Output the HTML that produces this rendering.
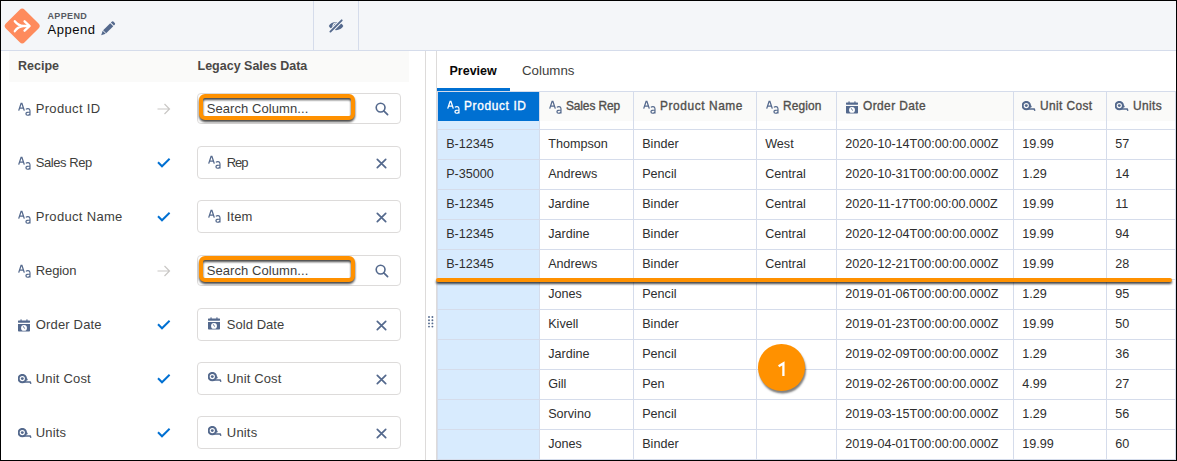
<!DOCTYPE html>
<html><head><meta charset="utf-8"><style>
html,body{margin:0;padding:0;}
body{width:1177px;height:461px;overflow:hidden;position:relative;background:#fff;font-family:"Liberation Sans", sans-serif;}
</style></head><body>
<div style="position:absolute;left:0;top:0;width:1177px;height:50px;background:#f4f6f9"></div>
<div style="position:absolute;left:0;top:50px;width:1177px;height:1px;background:#d5dceb"></div>
<div style="position:absolute;left:313px;top:0;width:1px;height:50px;background:#d5dceb"></div>
<div style="position:absolute;left:358px;top:0;width:1px;height:50px;background:#d5dceb"></div>
<svg style="position:absolute;left:3px;top:7px" width="38" height="38" viewBox="0 0 38 38">
<rect x="5.9" y="5.7" width="26.6" height="26.6" rx="3.5" fill="#fe8b5d" transform="rotate(45 19.2 19)"/>
<path d="M11.8 14.2 Q15.2 18.6 20.3 19 M11.8 24.2 Q15.2 19.4 20.3 19 M19 19 H26" stroke="#fff" stroke-width="2.3" fill="none" stroke-linecap="round"/>
<path d="M21.6 14.3 L26.6 19 L21.6 23.7" stroke="#fff" stroke-width="2.4" fill="none" stroke-linecap="round" stroke-linejoin="round"/>
</svg>
<div style="position:absolute;left:47.4px;top:5.78px;line-height:20px;font-size:9px;color:#565a62;font-weight:bold;white-space:nowrap;letter-spacing:0.394px;">APPEND</div>
<div style="position:absolute;left:47.4px;top:19.80px;line-height:20px;font-size:13px;color:#080707;font-weight:normal;white-space:nowrap;letter-spacing:0.570px;">Append</div>
<svg style="position:absolute;left:98px;top:19px" width="20" height="20" viewBox="0 0 20 20">
<g transform="translate(3.2 16.2) rotate(-45)"><path d="M0 0 L4.2 -2.15 V2.15 Z" fill="#54698d"/><rect x="4.9" y="-2.15" width="10" height="4.3" fill="#54698d"/><path d="M15.8 -2.15 H17 Q18.2 -2.15 18.2 -1 V1 Q18.2 2.15 17 2.15 H15.8 Z" fill="#54698d"/></g></svg>
<svg style="position:absolute;left:327px;top:17px" width="18" height="18" viewBox="0 0 18 18">
<path d="M1.8 9.1 C4.2 3.6 13.9 3.6 16.3 9.1 C13.9 14.6 4.2 14.6 1.8 9.1 Z" fill="#54698d"/>
<path d="M6.2 10.2 A3 3 0 0 1 9.6 6.1" stroke="#f4f6f9" stroke-width="1.1" fill="none"/>
<path d="M3.4 14.6 L14.7 3.3" stroke="#f4f6f9" stroke-width="3.9"/>
<path d="M3.4 14.6 L14.7 3.3" stroke="#54698d" stroke-width="1.9" stroke-linecap="round"/></svg>
<div style="position:absolute;left:9px;top:51px;width:400px;height:31px;background:#fafaf9"></div>
<div style="position:absolute;left:18px;top:56.07px;line-height:20px;font-size:12.5px;color:#4a4846;font-weight:bold;white-space:nowrap;">Recipe</div>
<div style="position:absolute;left:197.5px;top:56.07px;line-height:20px;font-size:12.5px;color:#4a4846;font-weight:bold;white-space:nowrap;">Legacy Sales Data</div>
<svg style="position:absolute;left:18px;top:102.0px" width="14" height="14" viewBox="0 0 14 14">
<path d="M0.7 8.6 L3.1 1.3 H3.9 L6.3 8.6 M1.75 6.1 H5.25" stroke="#54698d" stroke-width="1.3" fill="none"/>
<path d="M7.9 7.4 C8.6 6.7 9.5 6.6 10.2 6.65 C11.5 6.8 12.0 7.6 12.0 8.7 V13.5 M12.0 10.0 C9.6 9.9 7.9 10.5 7.9 11.8 C7.9 12.8 8.6 13.2 9.5 13.2 C10.8 13.2 12.0 12.4 12.0 11.2" stroke="#54698d" stroke-width="1.15" fill="none"/></svg>
<div style="position:absolute;left:35.7px;top:98.50px;line-height:20px;font-size:13px;color:#3e3e3c;font-weight:normal;white-space:nowrap;letter-spacing:0.342px;">Product ID</div>
<svg style="position:absolute;left:157px;top:102.5px" width="14" height="12" viewBox="0 0 14 12">
<path d="M0.5 6 H12.5 M7.5 1 L12.5 6 L7.5 11" stroke="#c9c7c5" stroke-width="1.2" fill="none"/></svg>
<div style="position:absolute;left:197px;top:93.0px;width:204px;height:31px;box-sizing:border-box;border:1px solid #dddbda;border-radius:4px;background:#fff"></div>
<div style="position:absolute;left:206.7px;top:98.60px;line-height:20px;font-size:13px;color:#3e3e3c;font-weight:normal;white-space:nowrap;letter-spacing:0.078px;">Search Column...</div>
<svg style="position:absolute;left:375px;top:101.5px" width="14" height="14" viewBox="0 0 14 14">
<circle cx="5.6" cy="5.6" r="4.4" stroke="#54698d" stroke-width="1.6" fill="none"/>
<path d="M8.8 8.8 L12.6 12.6" stroke="#54698d" stroke-width="1.7" stroke-linecap="round"/></svg>
<div style="position:absolute;left:199px;top:94.0px;width:156px;height:26px;box-sizing:border-box;border:4px solid #ff9100;border-radius:6px;filter:drop-shadow(0.7px 2.2px 1px rgba(0,0,0,0.72))"></div>
<svg style="position:absolute;left:18px;top:156.0px" width="14" height="14" viewBox="0 0 14 14">
<path d="M0.7 8.6 L3.1 1.3 H3.9 L6.3 8.6 M1.75 6.1 H5.25" stroke="#54698d" stroke-width="1.3" fill="none"/>
<path d="M7.9 7.4 C8.6 6.7 9.5 6.6 10.2 6.65 C11.5 6.8 12.0 7.6 12.0 8.7 V13.5 M12.0 10.0 C9.6 9.9 7.9 10.5 7.9 11.8 C7.9 12.8 8.6 13.2 9.5 13.2 C10.8 13.2 12.0 12.4 12.0 11.2" stroke="#54698d" stroke-width="1.15" fill="none"/></svg>
<div style="position:absolute;left:35.7px;top:152.50px;line-height:20px;font-size:13px;color:#3e3e3c;font-weight:normal;white-space:nowrap;letter-spacing:-0.437px;">Sales Rep</div>
<svg style="position:absolute;left:157px;top:157.5px" width="14" height="10" viewBox="0 0 14 10">
<path d="M1 4.2 L5 8.3 L12.6 0.8" stroke="#0070d2" stroke-width="1.95" fill="none"/></svg>
<div style="position:absolute;left:197px;top:146.0px;width:204px;height:33px;box-sizing:border-box;border:1px solid #dddbda;border-radius:4px;background:#fff"></div>
<svg style="position:absolute;left:208px;top:154.5px" width="14" height="14" viewBox="0 0 14 14">
<path d="M0.7 8.6 L3.1 1.3 H3.9 L6.3 8.6 M1.75 6.1 H5.25" stroke="#54698d" stroke-width="1.3" fill="none"/>
<path d="M7.9 7.4 C8.6 6.7 9.5 6.6 10.2 6.65 C11.5 6.8 12.0 7.6 12.0 8.7 V13.5 M12.0 10.0 C9.6 9.9 7.9 10.5 7.9 11.8 C7.9 12.8 8.6 13.2 9.5 13.2 C10.8 13.2 12.0 12.4 12.0 11.2" stroke="#54698d" stroke-width="1.15" fill="none"/></svg>
<div style="position:absolute;left:226.8px;top:152.50px;line-height:20px;font-size:13px;color:#3e3e3c;font-weight:normal;white-space:nowrap;letter-spacing:-1.078px;">Rep</div>
<svg style="position:absolute;left:375.5px;top:157.5px" width="11" height="11" viewBox="0 0 11 11">
<path d="M1.3 1.3 L9.7 9.7 M9.7 1.3 L1.3 9.7" stroke="#54698d" stroke-width="1.7" fill="none" stroke-linecap="round"/></svg>
<svg style="position:absolute;left:18px;top:210.0px" width="14" height="14" viewBox="0 0 14 14">
<path d="M0.7 8.6 L3.1 1.3 H3.9 L6.3 8.6 M1.75 6.1 H5.25" stroke="#54698d" stroke-width="1.3" fill="none"/>
<path d="M7.9 7.4 C8.6 6.7 9.5 6.6 10.2 6.65 C11.5 6.8 12.0 7.6 12.0 8.7 V13.5 M12.0 10.0 C9.6 9.9 7.9 10.5 7.9 11.8 C7.9 12.8 8.6 13.2 9.5 13.2 C10.8 13.2 12.0 12.4 12.0 11.2" stroke="#54698d" stroke-width="1.15" fill="none"/></svg>
<div style="position:absolute;left:35.7px;top:206.50px;line-height:20px;font-size:13px;color:#3e3e3c;font-weight:normal;white-space:nowrap;letter-spacing:0.321px;">Product Name</div>
<svg style="position:absolute;left:157px;top:211.5px" width="14" height="10" viewBox="0 0 14 10">
<path d="M1 4.2 L5 8.3 L12.6 0.8" stroke="#0070d2" stroke-width="1.95" fill="none"/></svg>
<div style="position:absolute;left:197px;top:200.0px;width:204px;height:33px;box-sizing:border-box;border:1px solid #dddbda;border-radius:4px;background:#fff"></div>
<svg style="position:absolute;left:208px;top:208.5px" width="14" height="14" viewBox="0 0 14 14">
<path d="M0.7 8.6 L3.1 1.3 H3.9 L6.3 8.6 M1.75 6.1 H5.25" stroke="#54698d" stroke-width="1.3" fill="none"/>
<path d="M7.9 7.4 C8.6 6.7 9.5 6.6 10.2 6.65 C11.5 6.8 12.0 7.6 12.0 8.7 V13.5 M12.0 10.0 C9.6 9.9 7.9 10.5 7.9 11.8 C7.9 12.8 8.6 13.2 9.5 13.2 C10.8 13.2 12.0 12.4 12.0 11.2" stroke="#54698d" stroke-width="1.15" fill="none"/></svg>
<div style="position:absolute;left:226.8px;top:206.50px;line-height:20px;font-size:13px;color:#3e3e3c;font-weight:normal;white-space:nowrap;letter-spacing:0.072px;">Item</div>
<svg style="position:absolute;left:375.5px;top:211.5px" width="11" height="11" viewBox="0 0 11 11">
<path d="M1.3 1.3 L9.7 9.7 M9.7 1.3 L1.3 9.7" stroke="#54698d" stroke-width="1.7" fill="none" stroke-linecap="round"/></svg>
<svg style="position:absolute;left:18px;top:264.0px" width="14" height="14" viewBox="0 0 14 14">
<path d="M0.7 8.6 L3.1 1.3 H3.9 L6.3 8.6 M1.75 6.1 H5.25" stroke="#54698d" stroke-width="1.3" fill="none"/>
<path d="M7.9 7.4 C8.6 6.7 9.5 6.6 10.2 6.65 C11.5 6.8 12.0 7.6 12.0 8.7 V13.5 M12.0 10.0 C9.6 9.9 7.9 10.5 7.9 11.8 C7.9 12.8 8.6 13.2 9.5 13.2 C10.8 13.2 12.0 12.4 12.0 11.2" stroke="#54698d" stroke-width="1.15" fill="none"/></svg>
<div style="position:absolute;left:35.7px;top:260.50px;line-height:20px;font-size:13px;color:#3e3e3c;font-weight:normal;white-space:nowrap;letter-spacing:-0.082px;">Region</div>
<svg style="position:absolute;left:157px;top:264.5px" width="14" height="12" viewBox="0 0 14 12">
<path d="M0.5 6 H12.5 M7.5 1 L12.5 6 L7.5 11" stroke="#c9c7c5" stroke-width="1.2" fill="none"/></svg>
<div style="position:absolute;left:197px;top:255.0px;width:204px;height:31px;box-sizing:border-box;border:1px solid #dddbda;border-radius:4px;background:#fff"></div>
<div style="position:absolute;left:206.7px;top:260.60px;line-height:20px;font-size:13px;color:#3e3e3c;font-weight:normal;white-space:nowrap;letter-spacing:0.078px;">Search Column...</div>
<svg style="position:absolute;left:375px;top:263.5px" width="14" height="14" viewBox="0 0 14 14">
<circle cx="5.6" cy="5.6" r="4.4" stroke="#54698d" stroke-width="1.6" fill="none"/>
<path d="M8.8 8.8 L12.6 12.6" stroke="#54698d" stroke-width="1.7" stroke-linecap="round"/></svg>
<div style="position:absolute;left:199px;top:256.0px;width:156px;height:26px;box-sizing:border-box;border:4px solid #ff9100;border-radius:6px;filter:drop-shadow(0.7px 2.2px 1px rgba(0,0,0,0.72))"></div>
<svg style="position:absolute;left:18px;top:318.6px" width="12" height="13" viewBox="0 0 12 13">
<path d="M2.6 0.3 L3.5 0.3 L3.7 2 H2.4 Z M8.5 0.3 L9.4 0.3 L9.6 2 H8.3 Z" fill="#54698d"/>
<rect x="0" y="1.6" width="12" height="2.1" rx="0.4" fill="#54698d"/>
<path d="M0 4.9 H12 V11.7 Q12 12.5 11.2 12.5 H0.8 Q0 12.5 0 11.7 Z" fill="#54698d"/>
<circle cx="6" cy="8.9" r="2.95" fill="#fff"/><path d="M5.3 7.3 L6.6 9.6" stroke="#54698d" stroke-width="0.9" fill="none"/></svg>
<div style="position:absolute;left:35.7px;top:314.50px;line-height:20px;font-size:13px;color:#3e3e3c;font-weight:normal;white-space:nowrap;letter-spacing:0.179px;">Order Date</div>
<svg style="position:absolute;left:157px;top:319.5px" width="14" height="10" viewBox="0 0 14 10">
<path d="M1 4.2 L5 8.3 L12.6 0.8" stroke="#0070d2" stroke-width="1.95" fill="none"/></svg>
<div style="position:absolute;left:197px;top:308.0px;width:204px;height:33px;box-sizing:border-box;border:1px solid #dddbda;border-radius:4px;background:#fff"></div>
<svg style="position:absolute;left:208px;top:317.1px" width="12" height="13" viewBox="0 0 12 13">
<path d="M2.6 0.3 L3.5 0.3 L3.7 2 H2.4 Z M8.5 0.3 L9.4 0.3 L9.6 2 H8.3 Z" fill="#54698d"/>
<rect x="0" y="1.6" width="12" height="2.1" rx="0.4" fill="#54698d"/>
<path d="M0 4.9 H12 V11.7 Q12 12.5 11.2 12.5 H0.8 Q0 12.5 0 11.7 Z" fill="#54698d"/>
<circle cx="6" cy="8.9" r="2.95" fill="#fff"/><path d="M5.3 7.3 L6.6 9.6" stroke="#54698d" stroke-width="0.9" fill="none"/></svg>
<div style="position:absolute;left:226.8px;top:314.50px;line-height:20px;font-size:13px;color:#3e3e3c;font-weight:normal;white-space:nowrap;letter-spacing:0.041px;">Sold Date</div>
<svg style="position:absolute;left:375.5px;top:319.5px" width="11" height="11" viewBox="0 0 11 11">
<path d="M1.3 1.3 L9.7 9.7 M9.7 1.3 L1.3 9.7" stroke="#54698d" stroke-width="1.7" fill="none" stroke-linecap="round"/></svg>
<svg style="position:absolute;left:18px;top:373.5px" width="14" height="11" viewBox="0 0 14 11">
<circle cx="4.3" cy="4.6" r="3.65" stroke="#54698d" stroke-width="2.1" fill="none"/>
<circle cx="4.3" cy="4.6" r="1.45" fill="#54698d"/><circle cx="8.7" cy="5.6" r="1.0" fill="#54698d"/>
<path d="M6.5 8.1 H12.2 L12.7 9.3" stroke="#54698d" stroke-width="1.5" fill="none" stroke-linecap="round"/></svg>
<div style="position:absolute;left:35.7px;top:368.50px;line-height:20px;font-size:13px;color:#3e3e3c;font-weight:normal;white-space:nowrap;letter-spacing:0.196px;">Unit Cost</div>
<svg style="position:absolute;left:157px;top:373.5px" width="14" height="10" viewBox="0 0 14 10">
<path d="M1 4.2 L5 8.3 L12.6 0.8" stroke="#0070d2" stroke-width="1.95" fill="none"/></svg>
<div style="position:absolute;left:197px;top:362.0px;width:204px;height:33px;box-sizing:border-box;border:1px solid #dddbda;border-radius:4px;background:#fff"></div>
<svg style="position:absolute;left:208px;top:372.0px" width="14" height="11" viewBox="0 0 14 11">
<circle cx="4.3" cy="4.6" r="3.65" stroke="#54698d" stroke-width="2.1" fill="none"/>
<circle cx="4.3" cy="4.6" r="1.45" fill="#54698d"/><circle cx="8.7" cy="5.6" r="1.0" fill="#54698d"/>
<path d="M6.5 8.1 H12.2 L12.7 9.3" stroke="#54698d" stroke-width="1.5" fill="none" stroke-linecap="round"/></svg>
<div style="position:absolute;left:226.8px;top:368.50px;line-height:20px;font-size:13px;color:#3e3e3c;font-weight:normal;white-space:nowrap;letter-spacing:0.134px;">Unit Cost</div>
<svg style="position:absolute;left:375.5px;top:373.5px" width="11" height="11" viewBox="0 0 11 11">
<path d="M1.3 1.3 L9.7 9.7 M9.7 1.3 L1.3 9.7" stroke="#54698d" stroke-width="1.7" fill="none" stroke-linecap="round"/></svg>
<svg style="position:absolute;left:18px;top:427.5px" width="14" height="11" viewBox="0 0 14 11">
<circle cx="4.3" cy="4.6" r="3.65" stroke="#54698d" stroke-width="2.1" fill="none"/>
<circle cx="4.3" cy="4.6" r="1.45" fill="#54698d"/><circle cx="8.7" cy="5.6" r="1.0" fill="#54698d"/>
<path d="M6.5 8.1 H12.2 L12.7 9.3" stroke="#54698d" stroke-width="1.5" fill="none" stroke-linecap="round"/></svg>
<div style="position:absolute;left:35.7px;top:422.50px;line-height:20px;font-size:13px;color:#3e3e3c;font-weight:normal;white-space:nowrap;letter-spacing:0.190px;">Units</div>
<svg style="position:absolute;left:157px;top:427.5px" width="14" height="10" viewBox="0 0 14 10">
<path d="M1 4.2 L5 8.3 L12.6 0.8" stroke="#0070d2" stroke-width="1.95" fill="none"/></svg>
<div style="position:absolute;left:197px;top:416.0px;width:204px;height:33px;box-sizing:border-box;border:1px solid #dddbda;border-radius:4px;background:#fff"></div>
<svg style="position:absolute;left:208px;top:426.0px" width="14" height="11" viewBox="0 0 14 11">
<circle cx="4.3" cy="4.6" r="3.65" stroke="#54698d" stroke-width="2.1" fill="none"/>
<circle cx="4.3" cy="4.6" r="1.45" fill="#54698d"/><circle cx="8.7" cy="5.6" r="1.0" fill="#54698d"/>
<path d="M6.5 8.1 H12.2 L12.7 9.3" stroke="#54698d" stroke-width="1.5" fill="none" stroke-linecap="round"/></svg>
<div style="position:absolute;left:226.8px;top:422.50px;line-height:20px;font-size:13px;color:#3e3e3c;font-weight:normal;white-space:nowrap;letter-spacing:0.190px;">Units</div>
<svg style="position:absolute;left:375.5px;top:427.5px" width="11" height="11" viewBox="0 0 11 11">
<path d="M1.3 1.3 L9.7 9.7 M9.7 1.3 L1.3 9.7" stroke="#54698d" stroke-width="1.7" fill="none" stroke-linecap="round"/></svg>
<div style="position:absolute;left:425px;top:51px;width:1px;height:410px;background:#dddbda"></div>
<div style="position:absolute;left:436px;top:51px;width:1px;height:410px;background:#dddbda"></div>
<svg style="position:absolute;left:428.2px;top:316.2px" width="8" height="13" viewBox="0 0 8 13"><circle cx="1.0" cy="1.0" r="0.95" fill="#54698d"/><circle cx="4.4" cy="1.0" r="0.95" fill="#54698d"/><circle cx="1.0" cy="4.2" r="0.95" fill="#54698d"/><circle cx="4.4" cy="4.2" r="0.95" fill="#54698d"/><circle cx="1.0" cy="7.4" r="0.95" fill="#54698d"/><circle cx="4.4" cy="7.4" r="0.95" fill="#54698d"/><circle cx="1.0" cy="10.600000000000001" r="0.95" fill="#54698d"/><circle cx="4.4" cy="10.600000000000001" r="0.95" fill="#54698d"/></svg>
<div style="position:absolute;left:449.5px;top:60.87px;line-height:20px;font-size:12.5px;color:#080707;font-weight:bold;white-space:nowrap;">Preview</div>
<div style="position:absolute;left:522px;top:60.59px;line-height:20px;font-size:13.3px;color:#3e3e3c;font-weight:normal;white-space:nowrap;">Columns</div>
<div style="position:absolute;left:437px;top:88px;width:73px;height:3px;background:#0070d2"></div>
<div style="position:absolute;left:437px;top:91px;width:739px;height:1px;background:#d5dceb"></div>
<div style="position:absolute;left:437px;top:92px;width:738px;height:29px;background:#fafaf9"></div>
<div style="position:absolute;left:438px;top:92px;width:101px;height:29px;background:#0070d2"></div>
<div style="position:absolute;left:438px;top:121px;width:101px;height:340px;background:#d8ebfe"></div>
<div style="position:absolute;left:437px;top:129px;width:738px;height:1px;background:#d5dceb"></div>
<div style="position:absolute;left:437px;top:159px;width:738px;height:1px;background:#d5dceb"></div>
<div style="position:absolute;left:437px;top:189px;width:738px;height:1px;background:#d5dceb"></div>
<div style="position:absolute;left:437px;top:219px;width:738px;height:1px;background:#d5dceb"></div>
<div style="position:absolute;left:437px;top:249px;width:738px;height:1px;background:#d5dceb"></div>
<div style="position:absolute;left:437px;top:279px;width:738px;height:1px;background:#d5dceb"></div>
<div style="position:absolute;left:437px;top:309px;width:738px;height:1px;background:#d5dceb"></div>
<div style="position:absolute;left:437px;top:339px;width:738px;height:1px;background:#d5dceb"></div>
<div style="position:absolute;left:437px;top:369px;width:738px;height:1px;background:#d5dceb"></div>
<div style="position:absolute;left:437px;top:399px;width:738px;height:1px;background:#d5dceb"></div>
<div style="position:absolute;left:437px;top:429px;width:738px;height:1px;background:#d5dceb"></div>
<div style="position:absolute;left:437px;top:459px;width:738px;height:1px;background:#d5dceb"></div>
<div style="position:absolute;left:437px;top:92px;width:1px;height:369px;background:#d5dceb"></div>
<div style="position:absolute;left:539px;top:92px;width:1px;height:369px;background:#d5dceb"></div>
<div style="position:absolute;left:633px;top:92px;width:1px;height:369px;background:#d5dceb"></div>
<div style="position:absolute;left:756px;top:92px;width:1px;height:369px;background:#d5dceb"></div>
<div style="position:absolute;left:836px;top:92px;width:1px;height:369px;background:#d5dceb"></div>
<div style="position:absolute;left:1013px;top:92px;width:1px;height:369px;background:#d5dceb"></div>
<div style="position:absolute;left:1106px;top:92px;width:1px;height:369px;background:#d5dceb"></div>
<div style="position:absolute;left:1175px;top:92px;width:1px;height:369px;background:#d5dceb"></div>
<svg style="position:absolute;left:446.5px;top:100.0px" width="14" height="14" viewBox="0 0 14 14">
<path d="M0.7 8.6 L3.1 1.3 H3.9 L6.3 8.6 M1.75 6.1 H5.25" stroke="#ffffff" stroke-width="1.3" fill="none"/>
<path d="M7.9 7.4 C8.6 6.7 9.5 6.6 10.2 6.65 C11.5 6.8 12.0 7.6 12.0 8.7 V13.5 M12.0 10.0 C9.6 9.9 7.9 10.5 7.9 11.8 C7.9 12.8 8.6 13.2 9.5 13.2 C10.8 13.2 12.0 12.4 12.0 11.2" stroke="#ffffff" stroke-width="1.15" fill="none"/></svg>
<div style="position:absolute;left:464.025px;top:96.28px;line-height:20px;font-size:11.9px;color:#ffffff;font-weight:normal;white-space:nowrap;-webkit-text-stroke:0.35px #ffffff;letter-spacing:0.636px;">Product ID</div>
<svg style="position:absolute;left:548.5px;top:100.0px" width="14" height="14" viewBox="0 0 14 14">
<path d="M0.7 8.6 L3.1 1.3 H3.9 L6.3 8.6 M1.75 6.1 H5.25" stroke="#54698d" stroke-width="1.3" fill="none"/>
<path d="M7.9 7.4 C8.6 6.7 9.5 6.6 10.2 6.65 C11.5 6.8 12.0 7.6 12.0 8.7 V13.5 M12.0 10.0 C9.6 9.9 7.9 10.5 7.9 11.8 C7.9 12.8 8.6 13.2 9.5 13.2 C10.8 13.2 12.0 12.4 12.0 11.2" stroke="#54698d" stroke-width="1.15" fill="none"/></svg>
<div style="position:absolute;left:566.0250000000001px;top:96.28px;line-height:20px;font-size:11.9px;color:#514f4d;font-weight:normal;white-space:nowrap;-webkit-text-stroke:0.35px #514f4d;letter-spacing:-0.109px;">Sales Rep</div>
<svg style="position:absolute;left:642.5px;top:100.0px" width="14" height="14" viewBox="0 0 14 14">
<path d="M0.7 8.6 L3.1 1.3 H3.9 L6.3 8.6 M1.75 6.1 H5.25" stroke="#54698d" stroke-width="1.3" fill="none"/>
<path d="M7.9 7.4 C8.6 6.7 9.5 6.6 10.2 6.65 C11.5 6.8 12.0 7.6 12.0 8.7 V13.5 M12.0 10.0 C9.6 9.9 7.9 10.5 7.9 11.8 C7.9 12.8 8.6 13.2 9.5 13.2 C10.8 13.2 12.0 12.4 12.0 11.2" stroke="#54698d" stroke-width="1.15" fill="none"/></svg>
<div style="position:absolute;left:660.0250000000001px;top:96.28px;line-height:20px;font-size:11.9px;color:#514f4d;font-weight:normal;white-space:nowrap;-webkit-text-stroke:0.35px #514f4d;letter-spacing:0.583px;">Product Name</div>
<svg style="position:absolute;left:765.5px;top:100.0px" width="14" height="14" viewBox="0 0 14 14">
<path d="M0.7 8.6 L3.1 1.3 H3.9 L6.3 8.6 M1.75 6.1 H5.25" stroke="#54698d" stroke-width="1.3" fill="none"/>
<path d="M7.9 7.4 C8.6 6.7 9.5 6.6 10.2 6.65 C11.5 6.8 12.0 7.6 12.0 8.7 V13.5 M12.0 10.0 C9.6 9.9 7.9 10.5 7.9 11.8 C7.9 12.8 8.6 13.2 9.5 13.2 C10.8 13.2 12.0 12.4 12.0 11.2" stroke="#54698d" stroke-width="1.15" fill="none"/></svg>
<div style="position:absolute;left:783.0250000000001px;top:96.28px;line-height:20px;font-size:11.9px;color:#514f4d;font-weight:normal;white-space:nowrap;-webkit-text-stroke:0.35px #514f4d;letter-spacing:0.125px;">Region</div>
<svg style="position:absolute;left:846px;top:100.6px" width="12" height="13" viewBox="0 0 12 13">
<path d="M2.6 0.3 L3.5 0.3 L3.7 2 H2.4 Z M8.5 0.3 L9.4 0.3 L9.6 2 H8.3 Z" fill="#54698d"/>
<rect x="0" y="1.6" width="12" height="2.1" rx="0.4" fill="#54698d"/>
<path d="M0 4.9 H12 V11.7 Q12 12.5 11.2 12.5 H0.8 Q0 12.5 0 11.7 Z" fill="#54698d"/>
<circle cx="6" cy="8.9" r="2.95" fill="#fff"/><path d="M5.3 7.3 L6.6 9.6" stroke="#54698d" stroke-width="0.9" fill="none"/></svg>
<div style="position:absolute;left:863.0250000000001px;top:96.28px;line-height:20px;font-size:11.9px;color:#514f4d;font-weight:normal;white-space:nowrap;-webkit-text-stroke:0.35px #514f4d;letter-spacing:0.423px;">Order Date</div>
<svg style="position:absolute;left:1022px;top:100.8px" width="14" height="11" viewBox="0 0 14 11">
<circle cx="4.3" cy="4.6" r="3.65" stroke="#54698d" stroke-width="2.1" fill="none"/>
<circle cx="4.3" cy="4.6" r="1.45" fill="#54698d"/><circle cx="8.7" cy="5.6" r="1.0" fill="#54698d"/>
<path d="M6.5 8.1 H12.2 L12.7 9.3" stroke="#54698d" stroke-width="1.5" fill="none" stroke-linecap="round"/></svg>
<div style="position:absolute;left:1040.025px;top:96.28px;line-height:20px;font-size:11.9px;color:#514f4d;font-weight:normal;white-space:nowrap;-webkit-text-stroke:0.35px #514f4d;letter-spacing:0.393px;">Unit Cost</div>
<svg style="position:absolute;left:1115px;top:100.8px" width="14" height="11" viewBox="0 0 14 11">
<circle cx="4.3" cy="4.6" r="3.65" stroke="#54698d" stroke-width="2.1" fill="none"/>
<circle cx="4.3" cy="4.6" r="1.45" fill="#54698d"/><circle cx="8.7" cy="5.6" r="1.0" fill="#54698d"/>
<path d="M6.5 8.1 H12.2 L12.7 9.3" stroke="#54698d" stroke-width="1.5" fill="none" stroke-linecap="round"/></svg>
<div style="position:absolute;left:1133.025px;top:96.28px;line-height:20px;font-size:11.9px;color:#514f4d;font-weight:normal;white-space:nowrap;-webkit-text-stroke:0.35px #514f4d;letter-spacing:0.379px;">Units</div>
<div style="position:absolute;left:446.2px;top:134.23px;line-height:20px;font-size:12.6px;color:#2e2e2e;font-weight:normal;white-space:nowrap;">B-12345</div>
<div style="position:absolute;left:548.2px;top:134.23px;line-height:20px;font-size:12.6px;color:#2e2e2e;font-weight:normal;white-space:nowrap;">Thompson</div>
<div style="position:absolute;left:642.2px;top:134.23px;line-height:20px;font-size:12.6px;color:#2e2e2e;font-weight:normal;white-space:nowrap;">Binder</div>
<div style="position:absolute;left:765.2px;top:134.23px;line-height:20px;font-size:12.6px;color:#2e2e2e;font-weight:normal;white-space:nowrap;">West</div>
<div style="position:absolute;left:845.2px;top:134.23px;line-height:20px;font-size:12.6px;color:#2e2e2e;font-weight:normal;white-space:nowrap;">2020-10-14T00:00:00.000Z</div>
<div style="position:absolute;left:1022.2px;top:134.23px;line-height:20px;font-size:12.6px;color:#2e2e2e;font-weight:normal;white-space:nowrap;">19.99</div>
<div style="position:absolute;left:1115.2px;top:134.23px;line-height:20px;font-size:12.6px;color:#2e2e2e;font-weight:normal;white-space:nowrap;">57</div>
<div style="position:absolute;left:446.2px;top:164.23px;line-height:20px;font-size:12.6px;color:#2e2e2e;font-weight:normal;white-space:nowrap;">P-35000</div>
<div style="position:absolute;left:548.2px;top:164.23px;line-height:20px;font-size:12.6px;color:#2e2e2e;font-weight:normal;white-space:nowrap;">Andrews</div>
<div style="position:absolute;left:642.2px;top:164.23px;line-height:20px;font-size:12.6px;color:#2e2e2e;font-weight:normal;white-space:nowrap;">Pencil</div>
<div style="position:absolute;left:765.2px;top:164.23px;line-height:20px;font-size:12.6px;color:#2e2e2e;font-weight:normal;white-space:nowrap;">Central</div>
<div style="position:absolute;left:845.2px;top:164.23px;line-height:20px;font-size:12.6px;color:#2e2e2e;font-weight:normal;white-space:nowrap;">2020-10-31T00:00:00.000Z</div>
<div style="position:absolute;left:1022.2px;top:164.23px;line-height:20px;font-size:12.6px;color:#2e2e2e;font-weight:normal;white-space:nowrap;">1.29</div>
<div style="position:absolute;left:1115.2px;top:164.23px;line-height:20px;font-size:12.6px;color:#2e2e2e;font-weight:normal;white-space:nowrap;">14</div>
<div style="position:absolute;left:446.2px;top:194.23px;line-height:20px;font-size:12.6px;color:#2e2e2e;font-weight:normal;white-space:nowrap;">B-12345</div>
<div style="position:absolute;left:548.2px;top:194.23px;line-height:20px;font-size:12.6px;color:#2e2e2e;font-weight:normal;white-space:nowrap;">Jardine</div>
<div style="position:absolute;left:642.2px;top:194.23px;line-height:20px;font-size:12.6px;color:#2e2e2e;font-weight:normal;white-space:nowrap;">Binder</div>
<div style="position:absolute;left:765.2px;top:194.23px;line-height:20px;font-size:12.6px;color:#2e2e2e;font-weight:normal;white-space:nowrap;">Central</div>
<div style="position:absolute;left:845.2px;top:194.23px;line-height:20px;font-size:12.6px;color:#2e2e2e;font-weight:normal;white-space:nowrap;">2020-11-17T00:00:00.000Z</div>
<div style="position:absolute;left:1022.2px;top:194.23px;line-height:20px;font-size:12.6px;color:#2e2e2e;font-weight:normal;white-space:nowrap;">19.99</div>
<div style="position:absolute;left:1115.2px;top:194.23px;line-height:20px;font-size:12.6px;color:#2e2e2e;font-weight:normal;white-space:nowrap;">11</div>
<div style="position:absolute;left:446.2px;top:224.23px;line-height:20px;font-size:12.6px;color:#2e2e2e;font-weight:normal;white-space:nowrap;">B-12345</div>
<div style="position:absolute;left:548.2px;top:224.23px;line-height:20px;font-size:12.6px;color:#2e2e2e;font-weight:normal;white-space:nowrap;">Jardine</div>
<div style="position:absolute;left:642.2px;top:224.23px;line-height:20px;font-size:12.6px;color:#2e2e2e;font-weight:normal;white-space:nowrap;">Binder</div>
<div style="position:absolute;left:765.2px;top:224.23px;line-height:20px;font-size:12.6px;color:#2e2e2e;font-weight:normal;white-space:nowrap;">Central</div>
<div style="position:absolute;left:845.2px;top:224.23px;line-height:20px;font-size:12.6px;color:#2e2e2e;font-weight:normal;white-space:nowrap;">2020-12-04T00:00:00.000Z</div>
<div style="position:absolute;left:1022.2px;top:224.23px;line-height:20px;font-size:12.6px;color:#2e2e2e;font-weight:normal;white-space:nowrap;">19.99</div>
<div style="position:absolute;left:1115.2px;top:224.23px;line-height:20px;font-size:12.6px;color:#2e2e2e;font-weight:normal;white-space:nowrap;">94</div>
<div style="position:absolute;left:446.2px;top:254.23px;line-height:20px;font-size:12.6px;color:#2e2e2e;font-weight:normal;white-space:nowrap;">B-12345</div>
<div style="position:absolute;left:548.2px;top:254.23px;line-height:20px;font-size:12.6px;color:#2e2e2e;font-weight:normal;white-space:nowrap;">Andrews</div>
<div style="position:absolute;left:642.2px;top:254.23px;line-height:20px;font-size:12.6px;color:#2e2e2e;font-weight:normal;white-space:nowrap;">Binder</div>
<div style="position:absolute;left:765.2px;top:254.23px;line-height:20px;font-size:12.6px;color:#2e2e2e;font-weight:normal;white-space:nowrap;">Central</div>
<div style="position:absolute;left:845.2px;top:254.23px;line-height:20px;font-size:12.6px;color:#2e2e2e;font-weight:normal;white-space:nowrap;">2020-12-21T00:00:00.000Z</div>
<div style="position:absolute;left:1022.2px;top:254.23px;line-height:20px;font-size:12.6px;color:#2e2e2e;font-weight:normal;white-space:nowrap;">19.99</div>
<div style="position:absolute;left:1115.2px;top:254.23px;line-height:20px;font-size:12.6px;color:#2e2e2e;font-weight:normal;white-space:nowrap;">28</div>
<div style="position:absolute;left:548.2px;top:284.23px;line-height:20px;font-size:12.6px;color:#2e2e2e;font-weight:normal;white-space:nowrap;">Jones</div>
<div style="position:absolute;left:642.2px;top:284.23px;line-height:20px;font-size:12.6px;color:#2e2e2e;font-weight:normal;white-space:nowrap;">Pencil</div>
<div style="position:absolute;left:845.2px;top:284.23px;line-height:20px;font-size:12.6px;color:#2e2e2e;font-weight:normal;white-space:nowrap;">2019-01-06T00:00:00.000Z</div>
<div style="position:absolute;left:1022.2px;top:284.23px;line-height:20px;font-size:12.6px;color:#2e2e2e;font-weight:normal;white-space:nowrap;">1.29</div>
<div style="position:absolute;left:1115.2px;top:284.23px;line-height:20px;font-size:12.6px;color:#2e2e2e;font-weight:normal;white-space:nowrap;">95</div>
<div style="position:absolute;left:548.2px;top:314.23px;line-height:20px;font-size:12.6px;color:#2e2e2e;font-weight:normal;white-space:nowrap;">Kivell</div>
<div style="position:absolute;left:642.2px;top:314.23px;line-height:20px;font-size:12.6px;color:#2e2e2e;font-weight:normal;white-space:nowrap;">Binder</div>
<div style="position:absolute;left:845.2px;top:314.23px;line-height:20px;font-size:12.6px;color:#2e2e2e;font-weight:normal;white-space:nowrap;">2019-01-23T00:00:00.000Z</div>
<div style="position:absolute;left:1022.2px;top:314.23px;line-height:20px;font-size:12.6px;color:#2e2e2e;font-weight:normal;white-space:nowrap;">19.99</div>
<div style="position:absolute;left:1115.2px;top:314.23px;line-height:20px;font-size:12.6px;color:#2e2e2e;font-weight:normal;white-space:nowrap;">50</div>
<div style="position:absolute;left:548.2px;top:344.23px;line-height:20px;font-size:12.6px;color:#2e2e2e;font-weight:normal;white-space:nowrap;">Jardine</div>
<div style="position:absolute;left:642.2px;top:344.23px;line-height:20px;font-size:12.6px;color:#2e2e2e;font-weight:normal;white-space:nowrap;">Pencil</div>
<div style="position:absolute;left:845.2px;top:344.23px;line-height:20px;font-size:12.6px;color:#2e2e2e;font-weight:normal;white-space:nowrap;">2019-02-09T00:00:00.000Z</div>
<div style="position:absolute;left:1022.2px;top:344.23px;line-height:20px;font-size:12.6px;color:#2e2e2e;font-weight:normal;white-space:nowrap;">1.29</div>
<div style="position:absolute;left:1115.2px;top:344.23px;line-height:20px;font-size:12.6px;color:#2e2e2e;font-weight:normal;white-space:nowrap;">36</div>
<div style="position:absolute;left:548.2px;top:374.23px;line-height:20px;font-size:12.6px;color:#2e2e2e;font-weight:normal;white-space:nowrap;">Gill</div>
<div style="position:absolute;left:642.2px;top:374.23px;line-height:20px;font-size:12.6px;color:#2e2e2e;font-weight:normal;white-space:nowrap;">Pen</div>
<div style="position:absolute;left:845.2px;top:374.23px;line-height:20px;font-size:12.6px;color:#2e2e2e;font-weight:normal;white-space:nowrap;">2019-02-26T00:00:00.000Z</div>
<div style="position:absolute;left:1022.2px;top:374.23px;line-height:20px;font-size:12.6px;color:#2e2e2e;font-weight:normal;white-space:nowrap;">4.99</div>
<div style="position:absolute;left:1115.2px;top:374.23px;line-height:20px;font-size:12.6px;color:#2e2e2e;font-weight:normal;white-space:nowrap;">27</div>
<div style="position:absolute;left:548.2px;top:404.23px;line-height:20px;font-size:12.6px;color:#2e2e2e;font-weight:normal;white-space:nowrap;">Sorvino</div>
<div style="position:absolute;left:642.2px;top:404.23px;line-height:20px;font-size:12.6px;color:#2e2e2e;font-weight:normal;white-space:nowrap;">Pencil</div>
<div style="position:absolute;left:845.2px;top:404.23px;line-height:20px;font-size:12.6px;color:#2e2e2e;font-weight:normal;white-space:nowrap;">2019-03-15T00:00:00.000Z</div>
<div style="position:absolute;left:1022.2px;top:404.23px;line-height:20px;font-size:12.6px;color:#2e2e2e;font-weight:normal;white-space:nowrap;">1.29</div>
<div style="position:absolute;left:1115.2px;top:404.23px;line-height:20px;font-size:12.6px;color:#2e2e2e;font-weight:normal;white-space:nowrap;">56</div>
<div style="position:absolute;left:548.2px;top:434.23px;line-height:20px;font-size:12.6px;color:#2e2e2e;font-weight:normal;white-space:nowrap;">Jones</div>
<div style="position:absolute;left:642.2px;top:434.23px;line-height:20px;font-size:12.6px;color:#2e2e2e;font-weight:normal;white-space:nowrap;">Binder</div>
<div style="position:absolute;left:845.2px;top:434.23px;line-height:20px;font-size:12.6px;color:#2e2e2e;font-weight:normal;white-space:nowrap;">2019-04-01T00:00:00.000Z</div>
<div style="position:absolute;left:1022.2px;top:434.23px;line-height:20px;font-size:12.6px;color:#2e2e2e;font-weight:normal;white-space:nowrap;">19.99</div>
<div style="position:absolute;left:1115.2px;top:434.23px;line-height:20px;font-size:12.6px;color:#2e2e2e;font-weight:normal;white-space:nowrap;">60</div>
<div style="position:absolute;left:436px;top:278px;width:736px;height:4px;background:#ff9100;border-radius:2px;filter:drop-shadow(0.7px 2.2px 1px rgba(0,0,0,0.72))"></div>
<div style="position:absolute;left:758.3px;top:344.2px;width:46.6px;height:46.6px;border-radius:50%;background:#ff9100;box-shadow:1px 2.5px 2px rgba(0,0,0,0.5)"></div>
<svg style="position:absolute;left:770px;top:355px" width="24" height="26" viewBox="0 0 24 26"><path d="M8.6 11.3 L13.4 8.4 V20.9" stroke="#fff" stroke-width="2.3" fill="none" stroke-linejoin="miter"/></svg>
<div style="position:absolute;left:0;top:0;width:1177px;height:461px;box-sizing:border-box;border:1px solid #000"></div>
</body></html>
